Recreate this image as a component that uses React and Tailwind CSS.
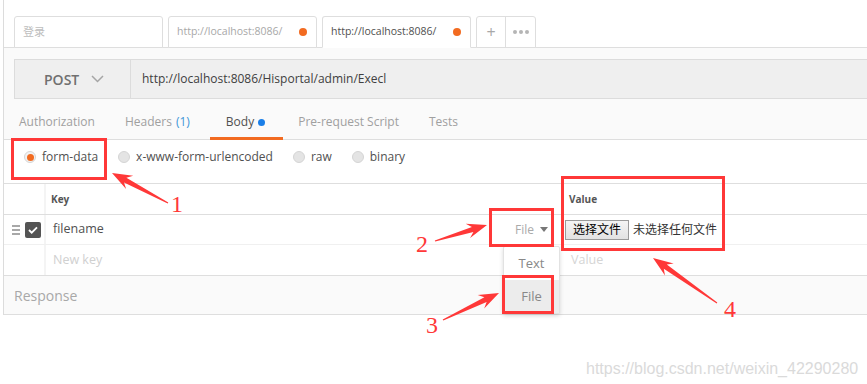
import React from 'react';

const arrowPoints = (tx, ty, px, py) => {
    const dx = px - tx;
    const dy = py - ty;
    const len = Math.hypot(dx, dy);
    const ux = dx / len;
    const uy = dy / len;
    const nx = -uy;
    const ny = ux;
    const hl = 20;
    const hw = 7.5;
    const sw = 2.6;
    const bx = px - ux * hl;
    const by = py - uy * hl;
    const nbx = px - ux * (hl - 5);
    const nby = py - uy * (hl - 5);
    const pts = [
        [tx + nx * 0.6, ty + ny * 0.6],
        [nbx + nx * sw, nby + ny * sw],
        [bx + nx * hw, by + ny * hw],
        [px, py],
        [bx - nx * hw, by - ny * hw],
        [nbx - nx * sw, nby - ny * sw],
        [tx - nx * 0.6, ty - ny * 0.6],
    ];
    return pts.map((p) => p.map((v) => v.toFixed(1)).join(',')).join(' ');
};

const arrows = [
    [168, 203, 112, 173],
    [435, 241, 487, 225],
    [443, 320, 499, 293],
    [717, 303, 653, 258],
];

const Tab = ({ label, active, muted }) => (
    <div
        className={`relative -mb-px flex h-[32px] w-[149px] items-center justify-between rounded-t-[3px] border border-[#dedede] pl-[8px] pr-[9px] ${
            active ? 'border-b-white bg-white text-[#505050]' : 'bg-white text-[#a8a8a8]'
        }`}
    >
        <span className={muted ? 'text-[11px] text-[#bdbdbd]' : 'text-[10.5px]'}>{label}</span>
        {!muted && <span className="h-[8px] w-[8px] rounded-full bg-[#f26b21]" />}
    </div>
);

const Radio = ({ label, checked }) => (
    <div className="flex items-center gap-[6px]">
        <span
            className={`flex h-[12px] w-[12px] items-center justify-center rounded-full border ${
                checked ? 'border-[#d5d5d5] bg-[#f2f2f2]' : 'border-[#d5d5d5] bg-[#e4e4e4]'
            }`}
        >
            {checked && <span className="h-[7px] w-[7px] rounded-full bg-[#f26b21]" />}
        </span>
        <span className="text-[12px] text-[#505050]">{label}</span>
    </div>
);

export default function App() {
    return (
        <div className="relative h-[384px] w-[867px] overflow-hidden bg-white font-['Open_Sans','Noto_Sans_CJK_SC',sans-serif]">
            <div className="ml-[3px] flex h-[315px] flex-col border-l border-[#dcdcdc]">
                {/* request tabs */}
                <div className="flex h-[48px] shrink-0 items-end gap-[5px] border-b border-[#dedede] pl-[10px]">
                    <Tab label="登录" muted />
                    <Tab label="http://localhost:8086/" />
                    <Tab label="http://localhost:8086/" active />
                    <div className="relative -mb-px flex h-[32px] rounded-t-[3px] border border-[#dedede] bg-white text-[#a8a8a8]">
                        <div className="flex w-[29px] items-center justify-center border-r border-[#dedede] text-[16px] leading-none">+</div>
                        <div className="flex w-[29px] items-center justify-center gap-[2px]">
                            <span className="h-[4px] w-[4px] rounded-full bg-[#b5b5b5]" />
                            <span className="h-[4px] w-[4px] rounded-full bg-[#b5b5b5]" />
                            <span className="h-[4px] w-[4px] rounded-full bg-[#b5b5b5]" />
                        </div>
                    </div>
                </div>

                <div className="shrink-0 bg-[#fafafa] pt-[11px]">
                    {/* url bar */}
                    <div className="-mr-[20px] ml-[10px] flex h-[40px] border border-[#dcdcdc] bg-[#efefef]">
                        <div className="flex w-[116px] items-center gap-[12px] border-r border-[#dcdcdc] pl-[29px]">
                            <span className="text-[14px] font-semibold text-[#707070]">POST</span>
                            <svg width="13" height="8" viewBox="0 0 13 8" fill="none" stroke="#a5a5a5" strokeWidth="1.5">
                                <path d="M1 1l5.5 5.5L12 1" />
                            </svg>
                        </div>
                        <div className="flex items-center pl-[11px] text-[12px] text-[#404040]">
                            http://localhost:8086/Hisportal/admin/Execl
                        </div>
                    </div>

                    {/* sub tabs */}
                    <div className="flex h-[41px] items-stretch border-b border-[#dedede] text-[12px] text-[#a0a0a0]">
                        <div className="flex items-center px-[15px] pt-[6px]">Authorization</div>
                        <div className="flex items-center px-[15px] pt-[6px]">
                            Headers <span className="ml-[4px] text-[#3d96d8]">(1)</span>
                        </div>
                        <div className="relative ml-[5px] flex items-center gap-[4px] pl-[16px] pr-[18px] pt-[6px] text-[#505050]">
                            Body
                            <span className="h-[7px] w-[7px] rounded-full bg-[#1b7fe8]" />
                            <span className="absolute bottom-[-1px] left-0 right-0 h-[3px] bg-[#f26b21]" />
                        </div>
                        <div className="flex items-center px-[15px] pt-[6px]">Pre-request Script</div>
                        <div className="flex items-center px-[15px] pt-[6px]">Tests</div>
                    </div>
                </div>

                {/* body type */}
                <div className="flex h-[44px] shrink-0 items-center gap-[20px] border-b border-[#dedede] pb-[9px] pl-[20px]">
                    <Radio label="form-data" checked />
                    <Radio label="x-www-form-urlencoded" />
                    <Radio label="raw" />
                    <Radio label="binary" />
                </div>

                {/* key/value table */}
                <div className="flex h-[31px] shrink-0 border-b border-[#dedede]">
                    <div className="w-[42px] border-r-2 border-[#f4f4f4]" />
                    <div className="flex w-[514px] items-center pl-[5px] text-[10px] font-bold text-[#555]">Key</div>
                    <div className="flex items-center pl-[9px] text-[10px] font-bold text-[#555]">Value</div>
                </div>
                <div className="flex h-[30px] shrink-0 border-b border-[#f0f0f0]">
                    <div className="flex w-[42px] items-center gap-[5px] border-r-2 border-[#f4f4f4] pl-[8px]">
                        <div className="flex flex-col gap-[2px]">
                            <span className="h-[2px] w-[8px] bg-[#a8a8a8]" />
                            <span className="h-[2px] w-[8px] bg-[#a8a8a8]" />
                            <span className="h-[2px] w-[8px] bg-[#a8a8a8]" />
                        </div>
                        <span className="flex h-[16px] w-[16px] items-center justify-center rounded-[2px] bg-[#545454]">
                            <svg width="10" height="8" viewBox="0 0 10 8" fill="none" stroke="white" strokeWidth="1.8">
                                <path d="M1 4l2.7 2.7L9 1.3" />
                            </svg>
                        </span>
                    </div>
                    <div className="flex w-[514px] items-center justify-between pl-[7px] pr-[12px]">
                        <span className="text-[12.5px] text-[#505050]">filename</span>
                        <span className="flex items-center gap-[6px] text-[12px] text-[#aaaaaa]">
                            File
                            <span className="h-0 w-0 border-x-[4.5px] border-t-[5px] border-x-transparent border-t-[#777]" />
                        </span>
                    </div>
                    <div className="flex items-center pl-[5px]">
                        <span className="flex h-[20px] w-[64px] items-center justify-center border border-[#9a9a9a] bg-[linear-gradient(#f4f4f4,#e2e2e2)] text-[12px] leading-none text-black">
                            选择文件
                        </span>
                        <span className="ml-[4px] text-[12px] text-[#333]">未选择任何文件</span>
                    </div>
                </div>
                <div className="flex h-[30px] shrink-0">
                    <div className="w-[42px] border-r-2 border-[#f4f4f4]" />
                    <div className="flex w-[514px] items-center pl-[7px] text-[12.5px] text-[#d0d0d0]">New key</div>
                    <div className="flex items-center pl-[11px] text-[12.5px] text-[#d5d5d5]">Value</div>
                </div>

                {/* response */}
                <div className="flex h-[40px] shrink-0 items-center border-y border-[#dedede] bg-[#fafafa] pl-[10px] text-[14px] text-[#a8a8a8]">
                    Response
                </div>
            </div>

            {/* type dropdown */}
            <div className="absolute left-[503px] top-[246px] flex h-[68px] w-[57px] flex-col rounded-[2px] border border-[#e2e2e2] bg-white shadow-[0_2px_4px_rgba(0,0,0,0.15)]">
                <div className="flex h-[33px] items-center justify-center text-[13px] text-[#888]">Text</div>
                <div className="flex h-[33px] items-center justify-center bg-[#ececec] text-[13px] text-[#888]">File</div>
            </div>

            {/* annotations */}
            <div className="absolute left-[11px] top-[138px] h-[42px] w-[96px] border-[3px] border-[#ff3838]" />
            <div className="absolute left-[489px] top-[208px] h-[39px] w-[65px] border-[3px] border-[#ff3838]" />
            <div className="absolute left-[502px] top-[275px] h-[39px] w-[52px] border-[3px] border-[#ff3838]" />
            <div className="absolute left-[561px] top-[176px] h-[75px] w-[164px] border-[3px] border-[#ff3838]" />

            <svg className="pointer-events-none absolute left-0 top-0" width="867" height="384">
                {arrows.map((a, i) => (
                    <polygon key={i} points={arrowPoints(...a)} fill="#ff3838" />
                ))}
            </svg>

            <span className="absolute left-[171px] top-[192px] font-['Liberation_Serif',serif] text-[24px] leading-none text-[#ff3838]">1</span>
            <span className="absolute left-[416px] top-[232px] font-['Liberation_Serif',serif] text-[24px] leading-none text-[#ff3838]">2</span>
            <span className="absolute left-[426px] top-[313px] font-['Liberation_Serif',serif] text-[24px] leading-none text-[#ff3838]">3</span>
            <span className="absolute left-[724px] top-[297px] font-['Liberation_Serif',serif] text-[24px] leading-none text-[#ff3838]">4</span>

            <span className="absolute left-[586px] top-[357px] font-['Liberation_Sans',sans-serif] text-[16px] text-[#dadada]">
                https://blog.csdn.net/weixin_42290280
            </span>
        </div>
    );
}
